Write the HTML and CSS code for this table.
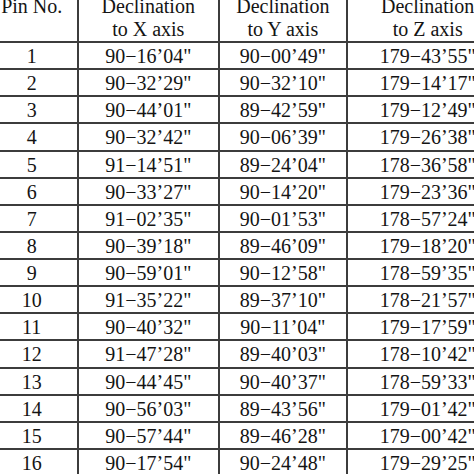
FILE: index.html
```html
<!DOCTYPE html>
<html>
<head>
<meta charset="utf-8">
<link rel="stylesheet" href="styles.css">
</head>
<body>
<div class="table">
  <div class="cell head top">Pin No.</div>
  <div class="cell head">Declination<br>to X axis</div>
  <div class="cell head">Declination<br>to Y axis</div>
  <div class="cell head">Declination<br>to Z axis</div>

  <div class="cell">1</div><div class="cell">90−16’04"</div><div class="cell">90−00’49"</div><div class="cell">179−43’55"</div>
  <div class="cell">2</div><div class="cell">90−32’29"</div><div class="cell">90−32’10"</div><div class="cell">179−14’17"</div>
  <div class="cell">3</div><div class="cell">90−44’01"</div><div class="cell">89−42’59"</div><div class="cell">179−12’49"</div>
  <div class="cell">4</div><div class="cell">90−32’42"</div><div class="cell">90−06’39"</div><div class="cell">179−26’38"</div>
  <div class="cell">5</div><div class="cell">91−14’51"</div><div class="cell">89−24’04"</div><div class="cell">178−36’58"</div>
  <div class="cell">6</div><div class="cell">90−33’27"</div><div class="cell">90−14’20"</div><div class="cell">179−23’36"</div>
  <div class="cell">7</div><div class="cell">91−02’35"</div><div class="cell">90−01’53"</div><div class="cell">178−57’24"</div>
  <div class="cell">8</div><div class="cell">90−39’18"</div><div class="cell">89−46’09"</div><div class="cell">179−18’20"</div>
  <div class="cell">9</div><div class="cell">90−59’01"</div><div class="cell">90−12’58"</div><div class="cell">178−59’35"</div>
  <div class="cell">10</div><div class="cell">91−35’22"</div><div class="cell">89−37’10"</div><div class="cell">178−21’57"</div>
  <div class="cell">11</div><div class="cell">90−40’32"</div><div class="cell">90−11’04"</div><div class="cell">179−17’59"</div>
  <div class="cell">12</div><div class="cell">91−47’28"</div><div class="cell">89−40’03"</div><div class="cell">178−10’42"</div>
  <div class="cell">13</div><div class="cell">90−44’45"</div><div class="cell">90−40’37"</div><div class="cell">178−59’33"</div>
  <div class="cell">14</div><div class="cell">90−56’03"</div><div class="cell">89−43’56"</div><div class="cell">179−01’42"</div>
  <div class="cell">15</div><div class="cell">90−57’44"</div><div class="cell">89−46’28"</div><div class="cell">179−00’42"</div>
  <div class="cell">16</div><div class="cell">90−17’54"</div><div class="cell">90−24’48"</div><div class="cell">179−29’25"</div>
</div>
</body>
</html>
```
FILE: styles.css
```css
html, body {
  margin: 0;
  padding: 0;
  background: #ffffff;
  overflow: hidden;
  width: 474px;
  height: 474px;
}
.table {
  display: grid;
  grid-template-columns: 89.5px 139.5px 125.7px 160px;
  grid-template-rows: 46px repeat(16, 25.13px);
  gap: 2px;
  background: #3c3c3c;
  margin-top: -5px;
  margin-left: -13px;
  width: max-content;
  font-family: "Liberation Serif", "Times New Roman", serif;
  font-size: 20px;
  color: #141414;
}
.cell {
  background: #ffffff;
  display: flex;
  align-items: center;
  justify-content: center;
  text-align: center;
  padding-top: 2px;
  box-sizing: border-box;
  white-space: nowrap;
}
.head {
  padding-top: 0;
  line-height: 23px;
}
.top {
  align-items: flex-start;
}
```
